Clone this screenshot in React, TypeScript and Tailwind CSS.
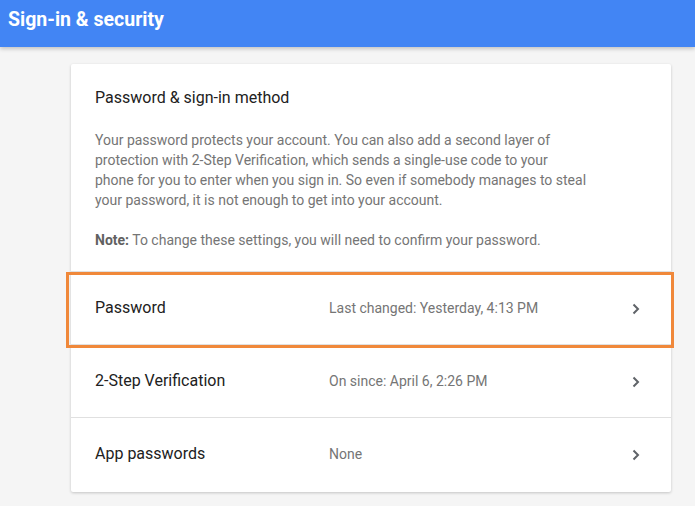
import React from "react"

const rows = [
  { label: "Password", value: "Last changed: Yesterday, 4:13 PM", highlight: true },
  { label: "2-Step Verification", value: "On since: April 6, 2:26 PM" },
  { label: "App passwords", value: "None" },
]

function Chevron() {
  return (
    <svg width="8" height="12" viewBox="0 0 8 12" className="text-[#5f6368]">
      <path d="M1.5 1.5 L6 6 L1.5 10.5" fill="none" stroke="currentColor" strokeWidth="2" />
    </svg>
  )
}

export default function App() {
  return (
    <div className="min-h-screen bg-[#f5f5f5] font-['Roboto',sans-serif]">
      {/* Header */}
      <div className="h-[47px] bg-[#4285f4] shadow-[0_2px_4px_rgba(0,0,0,0.2)] px-2 flex items-start pt-[7px]">
        <h1 className="text-[19.5px] font-bold text-white leading-[26px]">Sign-in &amp; security</h1>
      </div>

      <div className="pt-[17px] pl-[71px] pb-4">
        <div className="w-[600px] bg-white rounded-[2px] shadow-[0_1px_3px_rgba(0,0,0,0.2)] pb-[2px]">
          <div className="px-6 pt-6 pb-[21px]">
            <h2 className="text-[16px] leading-5 text-[#212121]">Password &amp; sign-in method</h2>
            <p className="mt-[22px] text-[14px] leading-5 text-[#757575] whitespace-nowrap">
              Your password protects your account. You can also add a second layer of
              <br />
              protection with 2-Step Verification, which sends a single-use code to your
              <br />
              phone for you to enter when you sign in. So even if somebody manages to steal
              <br />
              your password, it is not enough to get into your account.
            </p>
            <p className="mt-5 text-[14px] leading-5 text-[#757575]">
              <span className="font-bold text-[#616161]">Note:</span> To change these settings, you will
              need to confirm your password.
            </p>
          </div>

          <div>
            {rows.map((r) => (
              <div key={r.label} className="relative flex items-center h-[73px] px-6 border-t border-[#e0e0e0]">
                <div className="w-[234px] text-[16px] text-[#212121]">{r.label}</div>
                <div className="flex-1 text-[14px] text-[#757575]">{r.value}</div>
                <div className="pr-[7px] pt-[2px]">
                  <Chevron />
                </div>
                {r.highlight && (
                  <div className="absolute left-[-5px] right-[-3px] top-0 bottom-[-4px] border-[3px] border-[#f0883a] pointer-events-none" />
                )}
              </div>
            ))}
          </div>
        </div>
      </div>
    </div>
  )
}
